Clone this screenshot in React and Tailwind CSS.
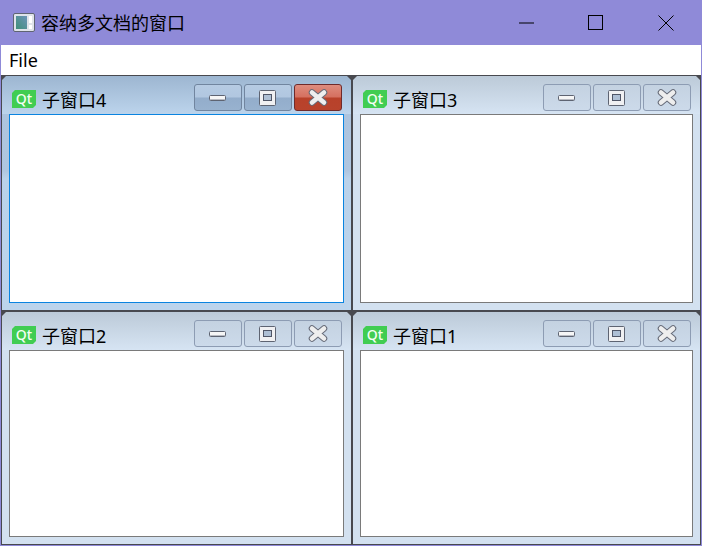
import React from 'react';

const cjk = "font-['Noto_Sans','Noto_Sans_CJK_SC',sans-serif]";

const QtLogo = () => (
  <svg width="24" height="18" viewBox="0 0 24 18" className="shrink-0">
    <path d="M3 0H24V15L21 18H0V3Z" fill="#41cd52" />
    <text x="12" y="14" textAnchor="middle" fontSize="14" fontWeight="500" fill="#f4fff5" fontFamily="Noto Sans, sans-serif">Qt</text>
  </svg>
);

const AppIcon = () => (
  <svg width="22" height="19" viewBox="0 0 22 19" className="shrink-0">
    <rect x="0.5" y="0.5" width="21" height="18" rx="1.5" fill="#dfe3ea" stroke="#5f6472" />
    <defs>
      <linearGradient id="appFill" x1="0" y1="1" x2="1" y2="0">
        <stop offset="0" stopColor="#3f8f7a" />
        <stop offset="1" stopColor="#6d94b8" />
      </linearGradient>
    </defs>
    <rect x="3" y="3" width="11" height="13" fill="url(#appFill)" />
    <rect x="16" y="3" width="3" height="7" fill="#fff" />
    <rect x="16" y="12" width="3" height="4" fill="#fff" />
  </svg>
);

const MinGlyph = () => (
  <svg width="18" height="8" viewBox="0 0 18 8">
    <rect x="0.5" y="1.5" width="16" height="5" rx="1" fill="#f6f6f6" stroke="#5e6472" />
    <rect x="1" y="5" width="15" height="1" fill="#b9bbc2" />
  </svg>
);

const MaxGlyph = () => (
  <svg width="18" height="16" viewBox="0 0 18 16">
    <rect x="0.5" y="0.5" width="16" height="15" rx="1" fill="#f0f0f2" stroke="#5e6472" />
    <rect x="4.5" y="4.5" width="8" height="6" fill="#aebfd4" stroke="#4f5566" />
  </svg>
);

const CloseGlyph = () => (
  <svg width="20" height="17" viewBox="0 0 20 17">
    <path d="M4 3.5L16 13.5M16 3.5L4 13.5" stroke="#666b78" strokeWidth="6.5" strokeLinecap="round" fill="none" />
    <path d="M4 3.5L16 13.5M16 3.5L4 13.5" stroke="#eeeeee" strokeWidth="4.5" strokeLinecap="round" fill="none" />
  </svg>
);

const SubButton = ({ kind, active }) => {
  const isClose = kind === 'close';
  let tone = 'border-[#8d9cb3] bg-gradient-to-b from-[#c4d2e1] to-[#ccdaea]';
  if (active) tone = 'border-[#71859f] bg-[linear-gradient(#b6cbe3_0%,#b1c7e0_48%,#93adcb_52%,#98b2cf_100%)]';
  if (active && isClose) tone = 'border-[#6f2a2a] bg-[linear-gradient(#de8c7e_0%,#d5705f_48%,#b8412a_52%,#b8432c_100%)]';
  return (
    <div className={`flex h-[27px] w-[48px] items-center justify-center rounded-[3px] border ${tone}`}>
      {kind === 'min' && <MinGlyph />}
      {kind === 'max' && <MaxGlyph />}
      {isClose && <CloseGlyph />}
    </div>
  );
};

const SubWindow = ({ title, active }) => (
  <div className="relative flex min-w-0 flex-col border border-[#48494f]">
    {/* small dark notches in the frame corners */}
    <div className="absolute left-0 top-0 h-0 w-0 border-r-[4px] border-t-[4px] border-r-transparent border-t-[#48494f]" />
    <div className="absolute right-0 top-0 h-0 w-0 border-l-[4px] border-t-[4px] border-l-transparent border-t-[#48494f]" />
    <div className={`flex h-[38px] shrink-0 items-center pl-[10px] pr-[9px] ${active ? 'bg-gradient-to-b from-[#9db6d1] to-[#bcd4ec]' : 'bg-gradient-to-b from-[#bccad8] to-[#d6e4f3]'}`}>
      <div className="mt-[8px] flex items-center"><QtLogo /></div>
      <span className={`ml-[6px] mt-[9px] text-[18px] leading-[24px] text-black ${cjk}`}>{title}</span>
      <div className="ml-auto flex gap-[2px] self-start pt-[8px]">
        <SubButton kind="min" active={active} />
        <SubButton kind="max" active={active} />
        <SubButton kind="close" active={active} />
      </div>
    </div>
    <div className={`min-h-0 flex-1 px-[7px] pb-[7px] ${active ? 'bg-[linear-gradient(#adc4de_0%,#afc6e0_29%,#bad2ea_33%,#bcd4ec_100%)]' : 'bg-[#d3e1f0]'}`}>
      <div className={`h-full border bg-white ${active ? 'border-[#0a84e0]' : 'border-[#7a7a7a]'}`} />
    </div>
  </div>
);

const App = () => (
  <div className={`flex h-[546px] w-[702px] flex-col overflow-hidden border-x border-b border-[#8f8ad8] bg-white ${cjk}`}>
    <div className="flex h-[45px] shrink-0 items-center bg-[#8f8ad8] pl-[12px]">
      <AppIcon />
      <span className="ml-[6px] text-[18px] leading-[24px] text-black">容纳多文档的窗口</span>
      <div className="ml-auto flex">
        <div className="flex w-[70px] items-center justify-center">
          <svg width="15" height="2" viewBox="0 0 15 2"><rect width="15" height="1" y="0.5" fill="#000" /></svg>
        </div>
        <div className="flex w-[70px] items-center justify-center pr-[2px]">
          <svg width="15" height="15" viewBox="0 0 15 15"><rect x="0.5" y="0.5" width="14" height="14" fill="none" stroke="#000" /></svg>
        </div>
        <div className="flex w-[70px] items-center justify-center">
          <svg width="16" height="16" viewBox="0 0 16 16"><path d="M0.5 0.5L15.5 15.5M15.5 0.5L0.5 15.5" stroke="#000" fill="none" /></svg>
        </div>
      </div>
    </div>
    <div className="flex h-[30px] shrink-0 items-center pl-[8px] text-[18px] leading-[24px] text-black">File</div>
    <div className="grid flex-1 grid-cols-[351px_349px] grid-rows-[236px_234px]">
      <SubWindow title="子窗口4" active />
      <SubWindow title="子窗口3" />
      <SubWindow title="子窗口2" />
      <SubWindow title="子窗口1" />
    </div>
  </div>
);

export default App;
